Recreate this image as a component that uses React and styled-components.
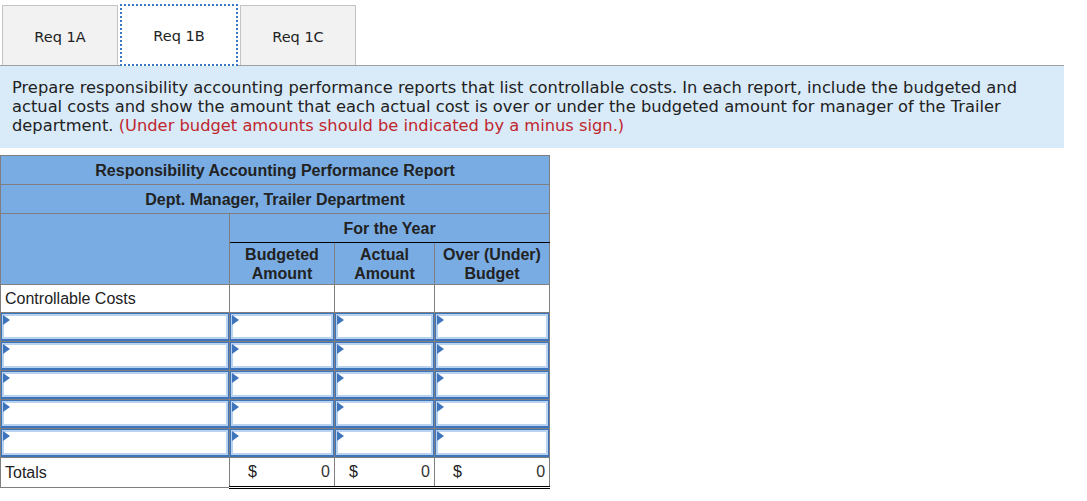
import React from "react";
import styled, { createGlobalStyle } from "styled-components";

const Global = createGlobalStyle`
  html, body { margin: 0; padding: 0; background: #fff; }
  body { font-family: "Liberation Sans", Arial, sans-serif; color: #222; }
`;

const Page = styled.div`
  width: 1064px;
`;

const TabBar = styled.div`
  display: flex;
  align-items: flex-end;
  gap: 2px;
  padding: 5px 0 0 2px;
  border-bottom: 1px solid #a0a0a0;
  height: 60px;
`;

const Tab = styled.div`
  box-sizing: border-box;
  width: ${(p) => (p.$active ? "118px" : "116px")};
  height: ${(p) => (p.$active ? "62px" : "60px")};
  margin-bottom: ${(p) => (p.$active ? "-1px" : "0")};
  padding-top: 2px;
  display: flex;
  align-items: center;
  justify-content: center;
  font-family: "DejaVu Sans", Verdana, sans-serif;
  font-size: 14.5px;
  color: #222;
  background: ${(p) => (p.$active ? "#fff" : "#f2f2f2")};
  border: ${(p) => (p.$active ? "2px dotted #3a78c4" : "1px solid #c4c4c4")};
  border-bottom: ${(p) => (p.$active ? "2px dotted #3a78c4" : "none")};
  position: relative;
  z-index: ${(p) => (p.$active ? 1 : 0)};
`;

const Instructions = styled.div`
  background: #d9ebf9;
  padding: 12px 12px 13px 12px;
  font-family: "DejaVu Sans", Verdana, sans-serif;
  font-size: 16.3px;
  line-height: 19px;
  color: #222;
`;

const Note = styled.span`
  color: #c0262e;
`;

const Table = styled.table`
  margin-top: 7px;
  border-collapse: collapse;
  width: 549px;
  table-layout: fixed;
  font-size: 16px;
`;

const HeadCell = styled.th`
  background: #78ace3;
  border: 1px solid #7f7f7f;
  border-bottom: ${(p) => (p.$dark ? "1px solid #000" : "1px solid #7f7f7f")};
  font-weight: bold;
  color: #222;
  text-align: center;
  height: ${(p) => p.$h || 28}px;
  padding: 0 4px;
  line-height: 19px;
  box-sizing: border-box;
`;

const Cell = styled.td`
  border: 1px solid #7f7f7f;
  height: ${(p) => p.$h || 28}px;
  padding: 0 4px;
  box-sizing: border-box;
  text-align: left;
  color: #222;
`;

const InputCell = styled.td`
  border: 1px solid #7f7f7f;
  height: 28px;
  padding: 0;
  box-sizing: border-box;
`;

const InputWrap = styled.div`
  position: relative;
  height: 28px;
  box-sizing: border-box;
  border: 1px solid #3d74bb;
  border-bottom-width: 2px;
  box-shadow: inset 0 0 0 2px #b9d2ef;
  background: #fff;
`;

const Marker = styled.span`
  position: absolute;
  left: 1px;
  top: 1px;
  width: 0;
  height: 0;
  border-top: 5px solid transparent;
  border-bottom: 5px solid transparent;
  border-left: 7px solid #3d74bb;
`;

const TotalCell = styled.td`
  border: 1px solid #7f7f7f;
  border-top: 1px solid #000;
  border-bottom: 3px double #000;
  height: 30px;
  padding: 0 4px 0 ${(p) => p.$pl || 18}px;
  box-sizing: border-box;
`;

const TotalInner = styled.div`
  display: flex;
  justify-content: space-between;
  color: #222;
`;

const Zero = styled.span`
  color: #333;
`;

function InputBox() {
  return (
    <InputCell>
      <InputWrap>
        <Marker />
      </InputWrap>
    </InputCell>
  );
}

export default function App() {
  const rows = [0, 1, 2, 3, 4];
  return (
    <Page>
      <Global />
      <TabBar>
        <Tab>Req 1A</Tab>
        <Tab $active>Req 1B</Tab>
        <Tab>Req 1C</Tab>
      </TabBar>
      <Instructions>
        Prepare responsibility accounting performance reports that list controllable costs. In each report, include the budgeted and actual costs and show the amount that each actual cost is over or under the budgeted amount for manager of the Trailer department.{" "}
        <Note>(Under budget amounts should be indicated by a minus sign.)</Note>
      </Instructions>
      <Table>
        <colgroup>
          <col style={{ width: 229 }} />
          <col style={{ width: 105 }} />
          <col style={{ width: 100 }} />
          <col style={{ width: 115 }} />
        </colgroup>
        <thead>
          <tr>
            <HeadCell colSpan={4} $h={29}>Responsibility Accounting Performance Report</HeadCell>
          </tr>
          <tr>
            <HeadCell colSpan={4} $h={29}>Dept. Manager, Trailer Department</HeadCell>
          </tr>
          <tr>
            <HeadCell rowSpan={2} />
            <HeadCell colSpan={3} $h={29} $dark>For the Year</HeadCell>
          </tr>
          <tr>
            <HeadCell $h={42}>Budgeted<br />Amount</HeadCell>
            <HeadCell $h={42}>Actual<br />Amount</HeadCell>
            <HeadCell $h={42}>Over (Under)<br />Budget</HeadCell>
          </tr>
        </thead>
        <tbody>
          <tr>
            <Cell>Controllable Costs</Cell>
            <Cell />
            <Cell />
            <Cell />
          </tr>
          {rows.map((r) => (
            <tr key={r}>
              <InputBox />
              <InputBox />
              <InputBox />
              <InputBox />
            </tr>
          ))}
          <tr>
            <Cell $h={30}>Totals</Cell>
            <TotalCell $pl={18}>
              <TotalInner><span>$</span><Zero>0</Zero></TotalInner>
            </TotalCell>
            <TotalCell $pl={14}>
              <TotalInner><span>$</span><Zero>0</Zero></TotalInner>
            </TotalCell>
            <TotalCell $pl={18}>
              <TotalInner><span>$</span><Zero>0</Zero></TotalInner>
            </TotalCell>
          </tr>
        </tbody>
      </Table>
    </Page>
  );
}
